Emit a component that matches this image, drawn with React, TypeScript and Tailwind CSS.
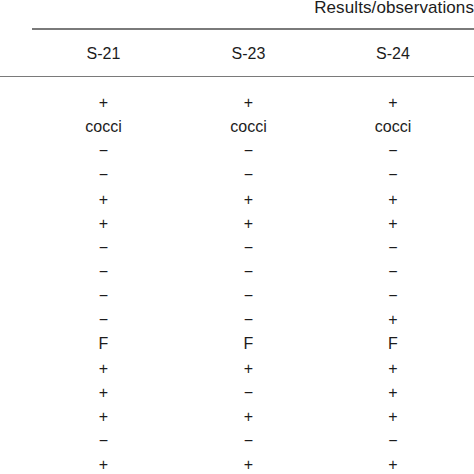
const samples = ["S-21", "S-23", "S-24"];

const rows: string[][] = [
  ["+", "+", "+"],
  ["cocci", "cocci", "cocci"],
  ["−", "−", "−"],
  ["−", "−", "−"],
  ["+", "+", "+"],
  ["+", "+", "+"],
  ["−", "−", "−"],
  ["−", "−", "−"],
  ["−", "−", "−"],
  ["−", "−", "+"],
  ["F", "F", "F"],
  ["+", "+", "+"],
  ["+", "−", "+"],
  ["+", "+", "+"],
  ["−", "−", "−"],
  ["+", "+", "+"],
];

export default function App() {
  return (
    <div className="w-[474px] h-[474px] overflow-hidden bg-white text-[#1c1c1c] font-['Liberation_Sans',Arial,sans-serif]">
      <div className="h-[28px] flex justify-end items-start">
        <span className="text-[17px] leading-[17px] -mt-[1px] whitespace-nowrap tracking-[0.1px]">
          Results/observations
        </span>
      </div>
      <div className="ml-[32px] h-[1.5px] bg-[#7a7a7a]"></div>

      <div className="grid grid-cols-[31px_145px_145px_144px_1fr] h-[46px] items-center pt-[3px] text-[16px]">
        <div></div>
        {samples.map((s) => (
          <div key={s} className="text-center">
            {s}
          </div>
        ))}
        <div></div>
      </div>
      <div className="h-[1.5px] bg-[#7a7a7a]"></div>

      <div className="pt-[14px] text-[16px]">
        {rows.map((row, i) => (
          <div
            key={i}
            className="grid grid-cols-[31px_145px_145px_144px_1fr] h-[24.15px] items-center leading-[24px]"
          >
            <div></div>
            {row.map((cell, j) => (
              <div key={j} className="text-center">
                {cell}
              </div>
            ))}
            <div></div>
          </div>
        ))}
      </div>
    </div>
  );
}
